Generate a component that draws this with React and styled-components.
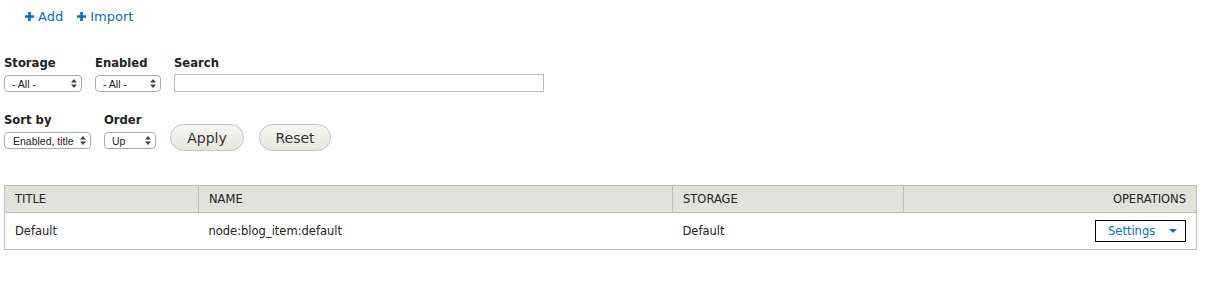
import React from "react";
import styled, { createGlobalStyle } from "styled-components";

const Global = createGlobalStyle`
  html, body { margin: 0; padding: 0; background: #fff; }
  body { font-family: "DejaVu Sans", Verdana, sans-serif; color: #222; }
`;

const Page = styled.div`
  padding: 0 4px;
  width: 1193px;
`;

const ActionBar = styled.ul`
  list-style: none;
  margin: 0;
  padding: 9px 0 0 21px;
  display: flex;
  gap: 14px;
  height: 22px;
`;

const ActionLink = styled.a`
  display: flex;
  align-items: center;
  gap: 4px;
  color: #0074bd;
  font-size: 13px;
  text-decoration: none;
`;

const Plus = () => (
  <svg width="9" height="9" viewBox="0 0 9 9">
    <path d="M3.2 0h2.6v3.2H9v2.6H5.8V9H3.2V5.8H0V3.2h3.2z" fill="#0074bd" />
  </svg>
);

const Filters = styled.form`
  display: flex;
  flex-direction: column;
  margin-top: 25px;
  gap: 21px;
`;

const FilterRow = styled.div`
  display: flex;
  align-items: ${(p) => p.$align ?? "flex-end"};
  gap: 13px;
`;

const Field = styled.div`
  display: flex;
  flex-direction: column;
  gap: 5px;
`;

const Label = styled.label`
  font-size: 11.6px;
  font-weight: bold;
  color: #222;
  line-height: 14px;
`;

const Select = styled.div`
  box-sizing: border-box;
  width: ${(p) => p.$w}px;
  height: 17px;
  border: 1px solid #aaa;
  border-radius: 4px;
  background: #fff;
  font-family: "Liberation Sans", Arial, sans-serif;
  font-size: 10.5px;
  color: #222;
  display: flex;
  align-items: center;
  justify-content: space-between;
  padding: 0 4px 0 ${(p) => p.$pl ?? 7}px;
`;

const Arrows = () => (
  <svg width="6" height="9" viewBox="0 0 6 9">
    <path d="M3 0L6 3.5H0z M3 9L0 5.5h6z" fill="#444" />
  </svg>
);

const SearchInput = styled.div`
  box-sizing: border-box;
  width: 370px;
  height: 18px;
  margin-top: -1px;
  border: 1px solid #b8b8b8;
  background: #fff;
`;

const Button = styled.button`
  box-sizing: border-box;
  width: ${(p) => p.$w}px;
  height: 27px;
  margin-left: ${(p) => p.$ml ?? 0}px;
  margin-bottom: -2px;
  border: 1px solid #c2c2c2;
  border-radius: 14px;
  background: linear-gradient(#f6f6f3, #e7e7df);
  font-family: "DejaVu Sans", Verdana, sans-serif;
  font-size: 14px;
  color: #333;
  padding: 0;
`;

const Table = styled.table`
  margin-top: 36px;
  width: 1193px;
  border-collapse: collapse;
  font-size: 11.5px;
  color: #222;
`;

const Th = styled.th`
  background: #e1e2dc;
  border: 1px solid #bfbfba;
  height: 26px;
  padding: 0 10px;
  font-weight: normal;
  text-transform: uppercase;
  text-align: ${(p) => (p.$right ? "right" : "left")};
  width: ${(p) => p.$w}px;
`;

const Td = styled.td`
  border-bottom: 1px solid #bfbfba;
  border-left: ${(p) => (p.$first ? "1px solid #bfbfba" : "none")};
  border-right: ${(p) => (p.$last ? "1px solid #bfbfba" : "none")};
  height: 36px;
  padding: 0 10px;
  text-align: ${(p) => (p.$right ? "right" : "left")};
`;

const Dropbutton = styled.div`
  display: inline-flex;
  align-items: center;
  justify-content: space-between;
  box-sizing: border-box;
  width: 91px;
  height: 22px;
  border: 1px solid #000;
  padding: 0 8px 0 12px;
  color: #0074bd;
  font-size: 11.5px;
  vertical-align: middle;
`;

const Caret = () => (
  <svg width="8" height="4" viewBox="0 0 8 4">
    <path d="M0 0h8L4 4z" fill="#0074bd" />
  </svg>
);

export default function App() {
  return (
    <>
      <Global />
      <Page>
        <ActionBar>
          <li>
            <ActionLink href="#"><Plus />Add</ActionLink>
          </li>
          <li>
            <ActionLink href="#"><Plus />Import</ActionLink>
          </li>
        </ActionBar>
        <Filters>
          <FilterRow $align="flex-start">
            <Field>
              <Label>Storage</Label>
              <Select $w={78}>- All -<Arrows /></Select>
            </Field>
            <Field>
              <Label>Enabled</Label>
              <Select $w={66}>- All -<Arrows /></Select>
            </Field>
            <Field>
              <Label>Search</Label>
              <SearchInput />
            </Field>
          </FilterRow>
          <FilterRow>
            <Field>
              <Label>Sort by</Label>
              <Select $w={87} $pl={8}>Enabled, title<Arrows /></Select>
            </Field>
            <Field>
              <Label>Order</Label>
              <Select $w={52}>Up<Arrows /></Select>
            </Field>
            <Button $w={74} $ml={1}>Apply</Button>
            <Button $w={72} $ml={2}>Reset</Button>
          </FilterRow>
        </Filters>
        <Table>
          <thead>
            <tr>
              <Th $w={173}>Title</Th>
              <Th $w={453}>Name</Th>
              <Th $w={210}>Storage</Th>
              <Th $right>Operations</Th>
            </tr>
          </thead>
          <tbody>
            <tr>
              <Td $first>Default</Td>
              <Td>node:blog_item:default</Td>
              <Td>Default</Td>
              <Td $last $right>
                <Dropbutton>Settings<Caret /></Dropbutton>
              </Td>
            </tr>
          </tbody>
        </Table>
      </Page>
    </>
  );
}
